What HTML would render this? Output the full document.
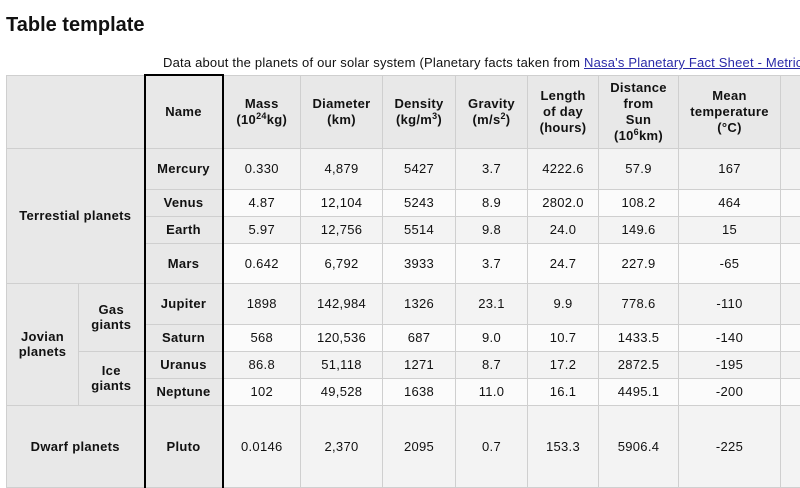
<!DOCTYPE html>
<html><head><meta charset="utf-8"><style>
html,body{margin:0;padding:0;width:800px;height:450px;overflow:hidden;background:#fff;font-family:"Liberation Sans",sans-serif;color:#111;}
h1{position:absolute;left:6px;top:14px;margin:0;font-size:20px;font-weight:bold;}
.cap{position:absolute;left:163px;top:55px;font-size:13px;white-space:nowrap;letter-spacing:0.2px}
.cap a{color:#2a2aa8;text-decoration:underline}
table{position:absolute;left:6px;top:74px;border-collapse:collapse;table-layout:fixed;width:1000px;font-size:13px;letter-spacing:0.3px}
td,th{border:1px solid #cfcfcf;text-align:center;padding:0 4px;line-height:15px}
thead th{line-height:16px}
th{background:#e8e8e8;font-weight:bold}
td{background:#f3f3f3}
tr.l td{background:#fbfbfb}
.n{border-left:2px solid #000;border-right:2px solid #000}
thead .n{border-top:2px solid #000}
sup{font-size:9px;line-height:0;vertical-align:5px}
</style></head><body>
<h1>Table template</h1>
<div class="cap">Data about the planets of our solar system (Planetary facts taken from <a>Nasa's Planetary Fact Sheet - Metric</a>).</div>
<table>
<colgroup><col style="width:72px"><col style="width:66px"><col style="width:78px"><col style="width:78px"><col style="width:82px"><col style="width:73px"><col style="width:72px"><col style="width:71px"><col style="width:80px"><col style="width:102px"><col style="width:226px"></colgroup>
<thead><tr style="height:73px"><th colspan="2"></th><th class="n">Name</th><th>Mass<br>(10<sup>24</sup>kg)</th><th>Diameter<br>(km)</th><th>Density<br>(kg/m<sup>3</sup>)</th><th>Gravity<br>(m/s<sup>2</sup>)</th><th>Length<br>of day<br>(hours)</th><th>Distance<br>from<br>Sun<br>(10<sup>6</sup>km)</th><th>Mean<br>temperature<br>(°C)</th><th>Number of<br>moons</th></tr></thead>
<tbody>
<tr style="height:41px"><th colspan="2" rowspan="4">Terrestial planets</th><th class="n">Mercury</th><td>0.330</td><td>4,879</td><td>5427</td><td>3.7</td><td>4222.6</td><td>57.9</td><td>167</td><td>0</td></tr>
<tr class="l" style="height:27px"><th class="n">Venus</th><td>4.87</td><td>12,104</td><td>5243</td><td>8.9</td><td>2802.0</td><td>108.2</td><td>464</td><td>0</td></tr>
<tr style="height:27px"><th class="n">Earth</th><td>5.97</td><td>12,756</td><td>5514</td><td>9.8</td><td>24.0</td><td>149.6</td><td>15</td><td>1</td></tr>
<tr class="l" style="height:40px"><th class="n">Mars</th><td>0.642</td><td>6,792</td><td>3933</td><td>3.7</td><td>24.7</td><td>227.9</td><td>-65</td><td>2</td></tr>
<tr style="height:41px"><th rowspan="4">Jovian planets</th><th rowspan="2">Gas giants</th><th class="n">Jupiter</th><td>1898</td><td>142,984</td><td>1326</td><td>23.1</td><td>9.9</td><td>778.6</td><td>-110</td><td>67</td></tr>
<tr class="l" style="height:27px"><th class="n">Saturn</th><td>568</td><td>120,536</td><td>687</td><td>9.0</td><td>10.7</td><td>1433.5</td><td>-140</td><td>62</td></tr>
<tr style="height:27px"><th rowspan="2">Ice giants</th><th class="n">Uranus</th><td>86.8</td><td>51,118</td><td>1271</td><td>8.7</td><td>17.2</td><td>2872.5</td><td>-195</td><td>27</td></tr>
<tr class="l" style="height:27px"><th class="n">Neptune</th><td>102</td><td>49,528</td><td>1638</td><td>11.0</td><td>16.1</td><td>4495.1</td><td>-200</td><td>14</td></tr>
<tr style="height:82px"><th colspan="2">Dwarf planets</th><th class="n">Pluto</th><td>0.0146</td><td>2,370</td><td>2095</td><td>0.7</td><td>153.3</td><td>5906.4</td><td>-225</td><td>5</td></tr>
</tbody></table>
</body></html>
